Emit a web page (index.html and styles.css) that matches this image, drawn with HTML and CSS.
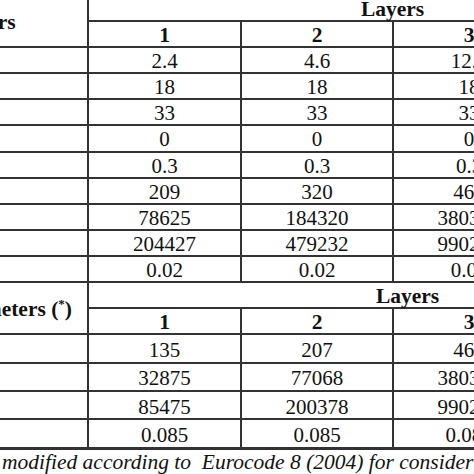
FILE: index.html
```html
<!DOCTYPE html>
<html>
<head>
<meta charset="utf-8">
<link rel="stylesheet" href="styles.css">
</head>
<body>
<div class="sheet">
<table class="grid">
  <colgroup>
    <col class="c-label"><col class="c-l1"><col class="c-ln"><col class="c-ln"><col class="c-ln">
  </colgroup>
  <tbody>
    <tr class="hrow">
      <th class="label" rowspan="2">Parameters</th>
      <th class="span" colspan="4">Layers</th>
    </tr>
    <tr class="hrow">
      <th>1</th><th>2</th><th>3</th><th>4</th>
    </tr>
    <tr class="row"><td class="label"></td><td>2.4</td><td>4.6</td><td>12.5</td><td>20</td></tr>
    <tr class="row"><td class="label"></td><td>18</td><td>18</td><td>18</td><td>19</td></tr>
    <tr class="row"><td class="label"></td><td>33</td><td>33</td><td>33</td><td>35</td></tr>
    <tr class="row"><td class="label"></td><td>0</td><td>0</td><td>0</td><td>0</td></tr>
    <tr class="row"><td class="label"></td><td>0.3</td><td>0.3</td><td>0.3</td><td>0.3</td></tr>
    <tr class="row"><td class="label"></td><td>209</td><td>320</td><td>461</td><td>550</td></tr>
    <tr class="row"><td class="label"></td><td>78625</td><td>184320</td><td>380328</td><td>554625</td></tr>
    <tr class="row"><td class="label"></td><td>204427</td><td>479232</td><td>990253</td><td>1442025</td></tr>
    <tr class="row"><td class="label"></td><td>0.02</td><td>0.02</td><td>0.02</td><td>0.02</td></tr>
    <tr class="hrow">
      <th class="label" rowspan="2">Dynamic parameters (<sup>*</sup>)</th>
      <th class="span span2" colspan="4">Layers</th>
    </tr>
    <tr class="hrow hrow-b">
      <th>1</th><th>2</th><th>3</th><th>4</th>
    </tr>
    <tr class="row2"><td class="label"></td><td>135</td><td>207</td><td>461</td><td>550</td></tr>
    <tr class="row2"><td class="label"></td><td>32875</td><td>77068</td><td>380328</td><td>554625</td></tr>
    <tr class="row2"><td class="label"></td><td>85475</td><td>200378</td><td>990253</td><td>1442025</td></tr>
    <tr class="row2 last"><td class="label"></td><td>0.085</td><td>0.085</td><td>0.085</td><td>0.085</td></tr>
  </tbody>
</table>
<p class="caption">modified according to&nbsp; Eurocode 8 (2004) for considering the</p>
</div>
</body>
</html>
```
FILE: styles.css
```css
html, body {
  margin: 0;
  padding: 0;
  background: #ffffff;
  overflow: hidden;
  width: 474px;
  height: 474px;
}
.sheet {
  margin-left: -162px;
  margin-top: -6px;
  width: 900px;
  font-family: "Liberation Serif", "Times New Roman", serif;
  color: #111111;
}
.grid {
  border-collapse: collapse;
  table-layout: fixed;
  width: 859px;
}
.c-label { width: 250px; }
.c-l1 { width: 153px; }
.c-ln { width: 152px; }
.grid th, .grid td {
  border: 2px solid #333333;
  padding: 0;
  text-align: center;
  vertical-align: middle;
  line-height: 22px;
}
.grid th {
  font-weight: bold;
  font-size: 21.5px;
}
.grid td {
  font-size: 21px;
  font-weight: normal;
}
.grid th.label,
.grid td.label {
  border-left: none;
}
.hrow th { height: 22px; padding-top: 2px; }
.hrow-b th { height: 21.5px; }
.row td { height: 22.15px; padding-top: 2px; }
.row2 td { height: 23.4px; padding-top: 3px; }
.grid th.span2 { padding-left: 30px; }
.last td { border-bottom-width: 3px; }
.grid sup {
  font-size: 13px;
  line-height: 0;
  vertical-align: 8px;
}
.caption {
  margin: 0;
  margin-left: 164px;
  font-style: italic;
  font-size: 21.5px;
  line-height: 24px;
  white-space: nowrap;
}
```
